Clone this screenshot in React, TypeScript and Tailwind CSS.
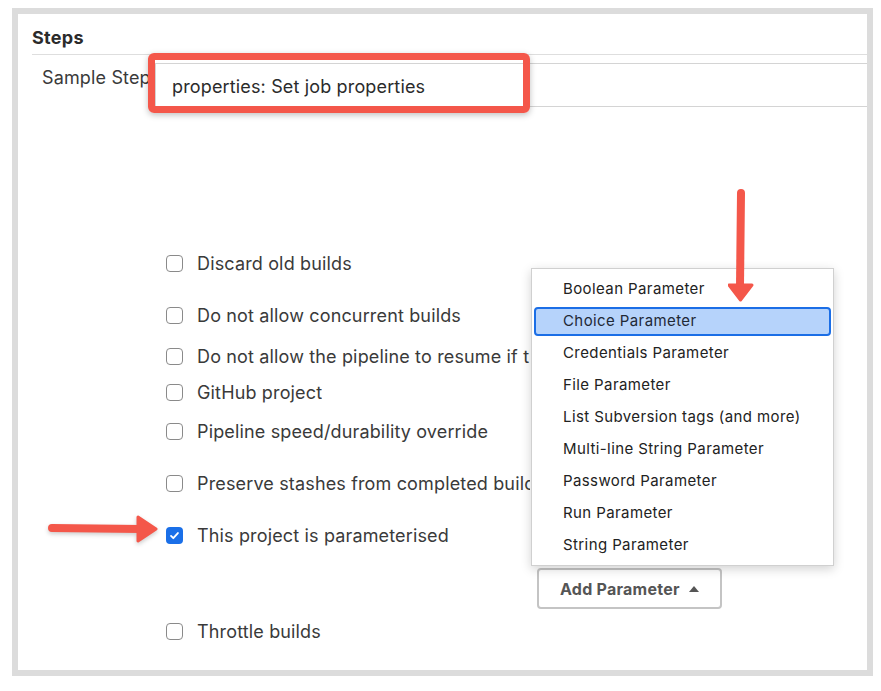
import React from 'react';

const options = [
  { label: 'Discard old builds', checked: false, mt: 'mt-[144px]' },
  { label: 'Do not allow concurrent builds', checked: false, mt: 'mt-[28px]' },
  { label: 'Do not allow the pipeline to resume if the controller restarts', checked: false, mt: 'mt-[17px]' },
  { label: 'GitHub project', checked: false, mt: 'mt-[12px]' },
  { label: 'Pipeline speed/durability override', checked: false, mt: 'mt-[15px]' },
  { label: 'Preserve stashes from completed builds', checked: false, mt: 'mt-[28px]' },
  { label: 'This project is parameterised', checked: true, mt: 'mt-[28px]' },
];

const parameterTypes = [
  'Boolean Parameter',
  'Choice Parameter',
  'Credentials Parameter',
  'File Parameter',
  'List Subversion tags (and more)',
  'Multi-line String Parameter',
  'Password Parameter',
  'Run Parameter',
  'String Parameter',
];

function Checkbox({ checked }: { checked: boolean }) {
  if (checked) {
    return (
      <span className="flex h-[17px] w-[17px] shrink-0 items-center justify-center rounded-[4px] bg-[#1a6fe8]">
        <svg width="11" height="11" viewBox="0 0 12 12" fill="none">
          <path d="M2.2 6.4l2.5 2.5 5-5.6" stroke="#fff" strokeWidth="2" strokeLinecap="round" strokeLinejoin="round" />
        </svg>
      </span>
    );
  }
  return <span className="h-[17px] w-[17px] shrink-0 rounded-[4px] border border-[#8a8a8a] bg-white" />;
}

// labels that run under the open menu are cut at its left edge
function OptionRow({ label, checked, mt }: { label: string; checked: boolean; mt: string }) {
  return (
    <div className={`flex h-[24px] items-center gap-[14px] ${mt}`}>
      <Checkbox checked={checked} />
      <span className="max-w-[333px] overflow-hidden whitespace-nowrap text-[18px] tracking-[0.15px] text-[#3a3a3a]">
        {label}
      </span>
    </div>
  );
}

function ParameterMenu() {
  return (
    <div className="absolute bottom-[calc(100%+2px)] left-[-6px] z-10 w-[303px] border border-[#d0d0d0] bg-white py-[4px] shadow-[0_3px_10px_rgba(0,0,0,0.18)]">
      {parameterTypes.map((name) => {
        const active = name === 'Choice Parameter';
        return (
          <div key={name} className="flex h-[32px] items-center px-[2px]">
            <div
              className={`flex h-[29px] w-full items-center rounded-[4px] text-[15px] tracking-[0.4px] ${
                active ? 'border-2 border-[#1b6ee6] bg-[#b6d3fb] pl-[27px] text-[#1f2937]' : 'pl-[29px] text-[#222]'
              }`}
            >
              {name}
            </div>
          </div>
        );
      })}
    </div>
  );
}

function DownArrow() {
  return (
    <svg className="absolute left-[710px] top-[174px] z-20" width="26" height="116" viewBox="0 0 26 116" fill="none">
      <line x1="13" y1="5" x2="12" y2="98" stroke="#f4574a" strokeWidth="8" strokeLinecap="round" />
      <path d="M1 97 L24 97 L12.5 112 Z" fill="#f4574a" stroke="#f4574a" strokeWidth="3" strokeLinejoin="round" />
    </svg>
  );
}

function RightArrow() {
  return (
    <svg className="absolute left-[28px] top-[500px] z-20 drop-shadow-[0_2px_2px_rgba(0,0,0,0.2)]" width="114" height="30" viewBox="0 0 114 30" fill="none">
      <line x1="6" y1="14" x2="95" y2="15" stroke="#f4574a" strokeWidth="8" strokeLinecap="round" />
      <path d="M92 3 L110 15 L92 27 Z" fill="#f4574a" stroke="#f4574a" strokeWidth="3" strokeLinejoin="round" />
    </svg>
  );
}

export default function App() {
  return (
    <div className="h-[691px] w-[881px] bg-white pl-[12px] pt-[8px] font-['Inter','Liberation_Sans',sans-serif]">
      <div className="relative h-[668px] w-[861px] overflow-hidden border-[6px] border-[#dcdcdc] bg-white">
        {/* Steps header */}
        <div className="ml-[14px] flex h-[41px] items-center border-b border-[#dedede] pt-[6px]">
          <span className="text-[18px] font-bold tracking-[0.3px] text-[#2b2b2b]">Steps</span>
        </div>

        {/* Sample step selector */}
        <div className="mt-[8px] flex pl-[24px]">
          <span className="w-[113px] shrink-0 whitespace-nowrap pt-[1px] text-[18px] tracking-[0.15px] text-[#3a3a3a]">
            Sample Step
          </span>
          <div className="flex h-[44px] flex-1 items-center border border-r-0 border-[#d4d4d4] pl-[16px] pt-[2px] text-[18px] tracking-[0.15px] text-[#2b2b2b]">
            properties: Set job properties
          </div>
        </div>

        {/* Options */}
        <div className="ml-[148px] flex flex-col">
          {options.map((o) => (
            <OptionRow key={o.label} label={o.label} checked={o.checked} mt={o.mt} />
          ))}
          <div className="relative ml-[371px] mt-[21px] w-[185px]">
            <ParameterMenu />
            <button className="flex h-[41px] w-[185px] items-center gap-[9px] rounded-[4px] border-2 border-[#c4c4c4] bg-white pl-[21px] text-[16px] font-bold tracking-[0.25px] text-[#555]">
              Add Parameter
              <svg width="10" height="6" viewBox="0 0 10 6">
                <path d="M0 6 L5 0 L10 6 Z" fill="#555" />
              </svg>
            </button>
          </div>
          <OptionRow label="Throttle builds" checked={false} mt="mt-[10px]" />
        </div>

        {/* Annotations */}
        <div className="pointer-events-none absolute left-[130px] top-[39px] z-20 h-[60px] w-[382px] rounded-[6px] border-[7px] border-[#f4574a] shadow-[0_2px_6px_rgba(0,0,0,0.25)]" />
        <DownArrow />
        <RightArrow />
      </div>
    </div>
  );
}
